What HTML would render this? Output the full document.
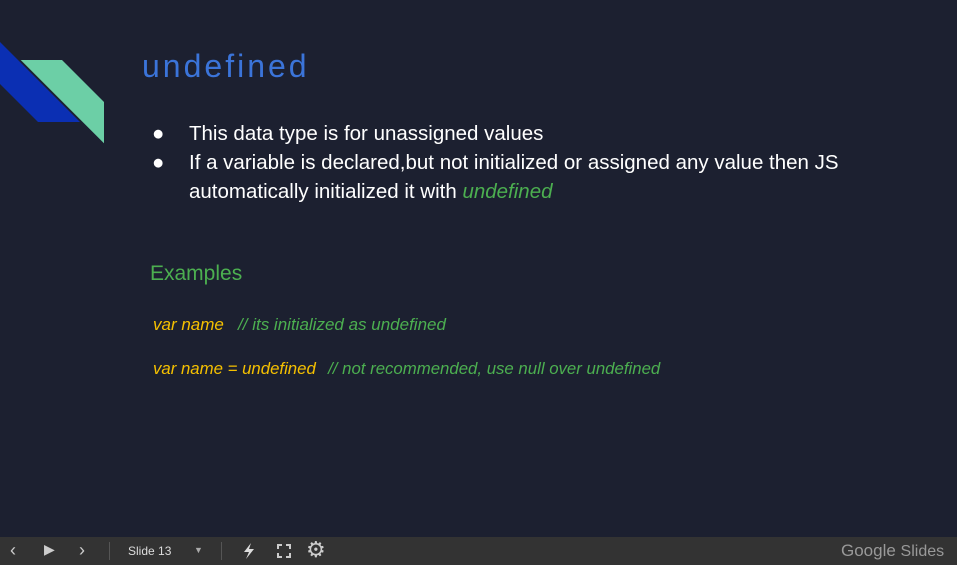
<!DOCTYPE html>
<html><head><style>
body{margin:0;width:957px;height:565px;background:#1c2030;position:relative;overflow:hidden;font-family:"Liberation Sans",sans-serif}
.t{position:absolute;white-space:nowrap}
.bar{position:absolute;left:0;top:537px;width:957px;height:28px;background:#333333}
</style></head><body>
<svg width="957" height="537" style="position:absolute;left:0;top:0">
<polygon points="0,42 80,122 38,122 0,84" fill="#0b2fb3"/>
<polygon points="20,60 62,60 104,102 104,144" fill="#6ccfa6"/>
<line x1="20" y1="60" x2="104" y2="144" stroke="#1c2030" stroke-width="1"/>
</svg>
<div class="t" style="left:142px;top:48px;font-size:32px;color:#3b74d9;letter-spacing:3px">undefined</div>
<div class="t" style="left:152px;top:119px;font-size:20.5px;color:#fff;line-height:29px">●</div>
<div class="t" style="left:189px;top:119px;font-size:20.5px;color:#fff;line-height:29px">This data type is for unassigned values</div>
<div class="t" style="left:152px;top:148px;font-size:20.5px;color:#fff;line-height:29px">●</div>
<div class="t" style="left:189px;top:148px;font-size:20.5px;color:#fff;line-height:29px">If a variable is declared,but not initialized or assigned any value then JS<br>automatically initialized it with <i style="color:#4caf50">undefined</i></div>
<div class="t" style="left:150px;top:262px;font-size:21px;color:#4caf50">Examples</div>
<div class="t" style="left:153px;top:315px;font-size:17px;font-style:italic;color:#f5c000">var name <span style="color:#4caf50">&nbsp;&nbsp;// its initialized as undefined</span></div>
<div class="t" style="left:153px;top:359px;font-size:16.8px;font-style:italic;color:#f5c000">var name = undefined <span style="color:#4caf50;margin-left:3px">&nbsp;// not recommended, use null over undefined</span></div>
<div class="bar"></div>
<div class="t" style="left:10px;top:540px;color:#ccc;font-size:18px">‹</div>
<div class="t" style="left:44px;top:541px;color:#ccc;font-size:14px">▶</div>
<div class="t" style="left:79px;top:540px;color:#ccc;font-size:18px">›</div>
<div style="position:absolute;left:109px;top:542px;width:1px;height:18px;background:#555"></div>
<div class="t" style="left:128px;top:544px;color:#ddd;font-size:12px">Slide 13</div>
<div class="t" style="left:194px;top:545px;color:#aaa;font-size:9px">▼</div>
<div style="position:absolute;left:221px;top:542px;width:1px;height:18px;background:#555"></div>
<svg style="position:absolute;left:240px;top:541px" width="20" height="20"><path d="M11 2 L4 11 L9 11 L6 18 L14 8 L9 8 Z" fill="#ddd"/></svg>
<svg style="position:absolute;left:276px;top:543px" width="16" height="16" fill="none" stroke="#ccc" stroke-width="2"><path d="M2 6V2H6M10 2H14V6M14 10V14H10M6 14H2V10"/></svg>
<div class="t" style="left:306px;top:537px;color:#ccc;font-size:22px">⚙</div>
<div class="t" style="left:841px;top:541px;color:#999;font-size:17px">Google <span style="font-size:16px">Slides</span></div>
</body></html>
